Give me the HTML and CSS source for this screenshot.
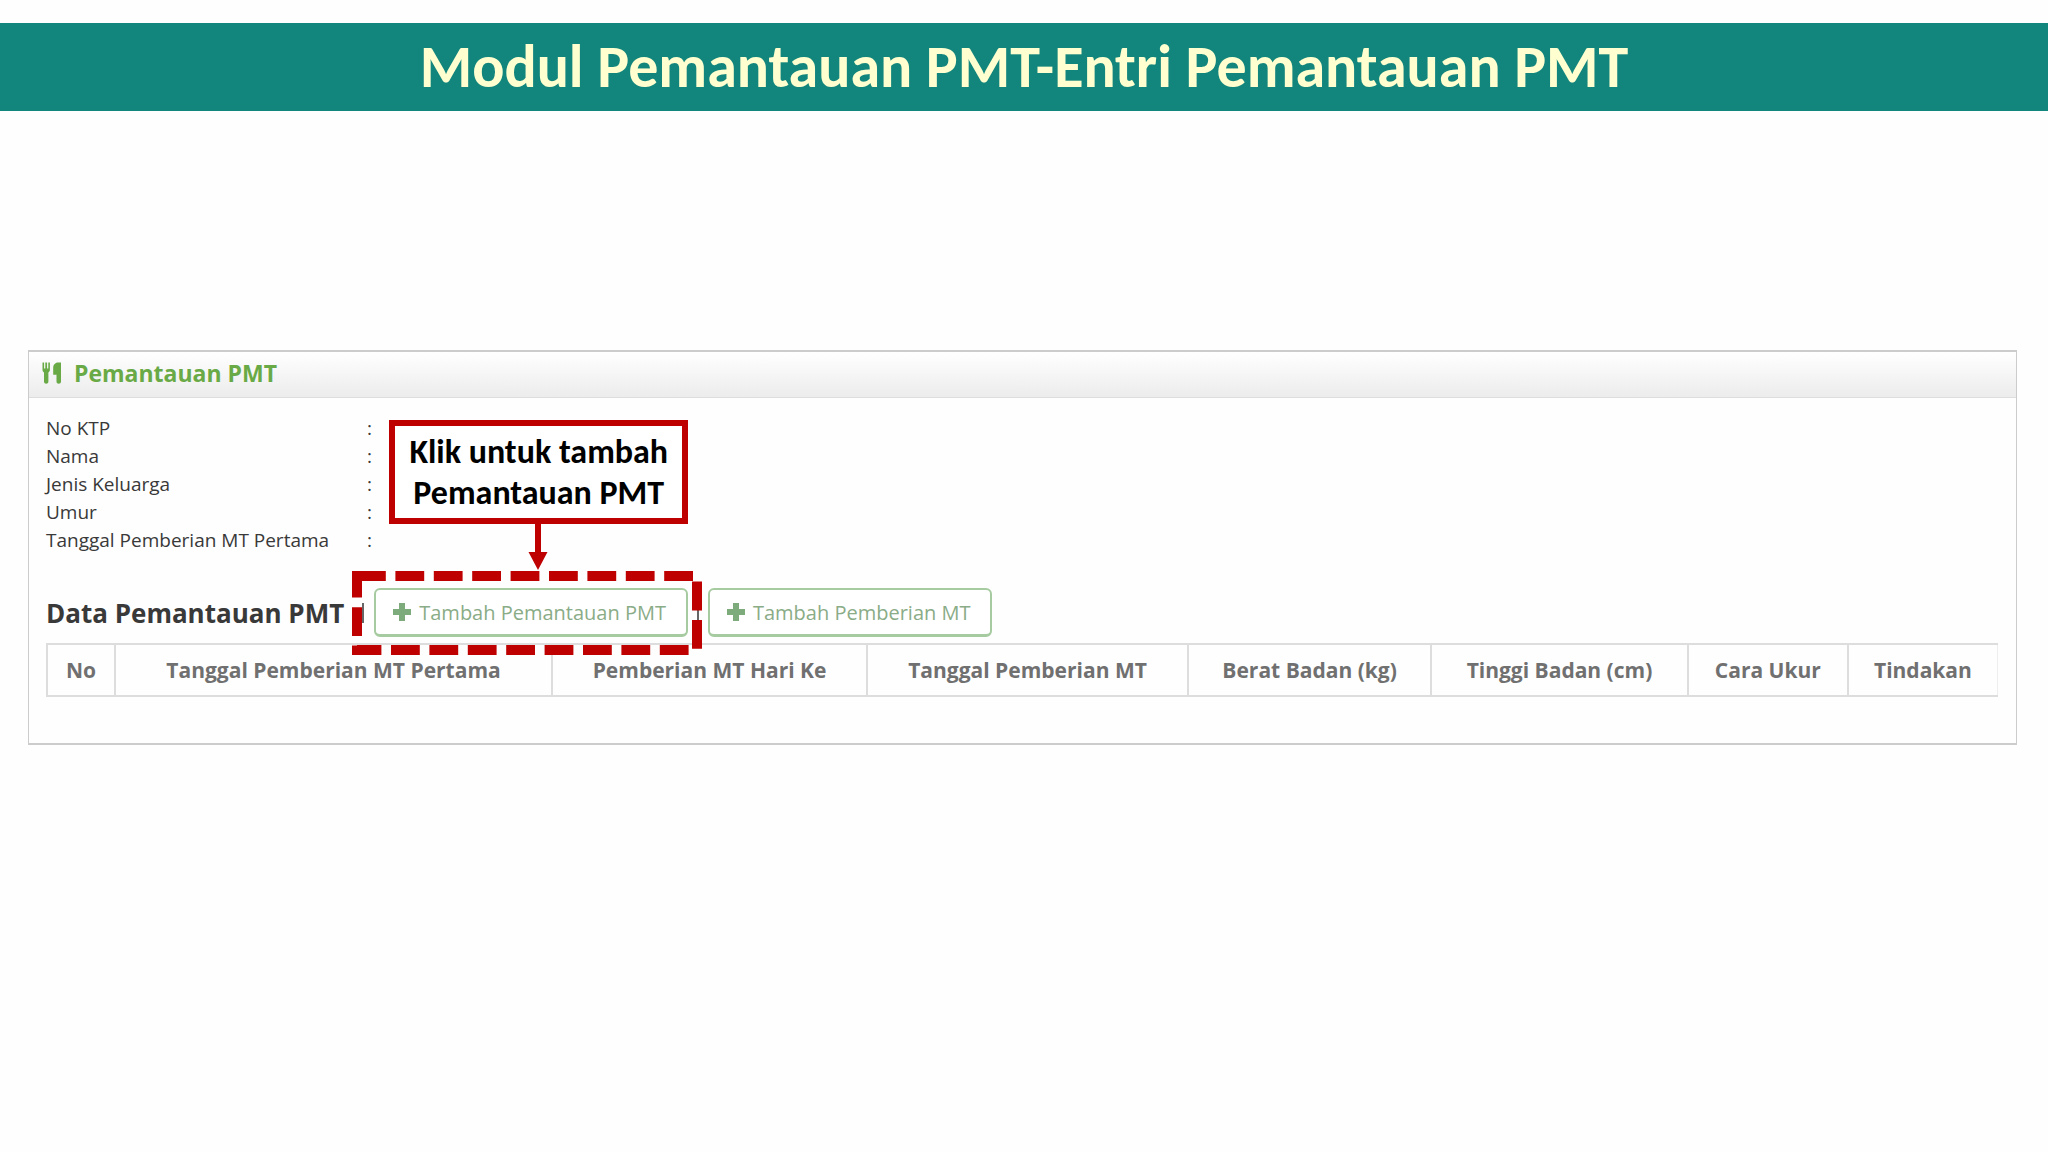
FILE: index.html
```html
<!DOCTYPE html>
<html lang="id">
<head>
  <meta charset="UTF-8">
  <meta name="viewport" content="width=device-width, initial-scale=1.0">
  <title>Modul Pemantauan PMT</title>
  <link rel="stylesheet" href="styles.css">
</head>
<body>
  <h1 class="banner">Modul Pemantauan PMT-Entri Pemantauan PMT</h1>

  <main class="panel">
    <div class="panel-header">
      <svg class="icon-cutlery" viewBox="0 0 20 22" aria-hidden="true">
        <path d="M0.500 0.500h1.600v6h1.200v-6h1.800v6h1.200v-6h1.600v7.300c0 1.300-.8 2.200-1.500 2.600v9.300c0 2.600-4.400 2.600-4.400 0v-9.300c-.7-.4-1.500-1.300-1.500-2.600z"/>
        <path d="M19 0.500v19.200c0 2.600-4.500 2.600-4.500 0v-6.900h-3.300V5.500c0-3 2.400-5 5.200-5z"/>
      </svg>
      <h2 class="panel-title">Pemantauan PMT</h2>
    </div>

    <div class="panel-body">
      <dl class="info">
        <dt>No KTP</dt><dd>:</dd>
        <dt>Nama</dt><dd>:</dd>
        <dt>Jenis Keluarga</dt><dd>:</dd>
        <dt>Umur</dt><dd>:</dd>
        <dt>Tanggal Pemberian MT Pertama</dt><dd>:</dd>
      </dl>

      <div class="toolbar">
        <h3 class="toolbar-title">Data Pemantauan PMT</h3>
        <span class="divider"></span>
        <div class="highlight">
          <button class="button" type="button">
            <svg class="icon-plus" viewBox="0 0 20 20" aria-hidden="true"><path d="M7 1h6v6h6v6h-6v6H7v-6H1V7h6z"/></svg>
            Tambah Pemantauan PMT
          </button>
          <svg class="dashes" viewBox="0 0 350 84" aria-hidden="true">
            <rect x="5" y="5" width="340" height="74"/>
          </svg>
          <svg class="arrow" viewBox="0 0 20 46" aria-hidden="true">
            <path d="M7 0h6v28h6.500L10 46 0.500 28H7z"/>
          </svg>
          <div class="callout">Klik untuk tambah<br>Pemantauan PMT</div>
        </div>
        <span class="divider"></span>
        <button class="button" type="button">
          <svg class="icon-plus" viewBox="0 0 20 20" aria-hidden="true"><path d="M7 1h6v6h6v6h-6v6H7v-6H1V7h6z"/></svg>
          Tambah Pemberian MT
        </button>
      </div>

      <table class="data-table">
        <thead>
          <tr>
            <th>No</th>
            <th>Tanggal Pemberian MT Pertama</th>
            <th>Pemberian MT Hari Ke</th>
            <th>Tanggal Pemberian MT</th>
            <th>Berat Badan (kg)</th>
            <th>Tinggi Badan (cm)</th>
            <th>Cara Ukur</th>
            <th>Tindakan</th>
          </tr>
        </thead>
      </table>
    </div>
  </main>
</body>
</html>
```
FILE: styles.css
```css
* {
  box-sizing: border-box;
}
body {
  margin: 0;
  padding-top: 23px;
  font-family: "Open Sans", sans-serif;
  font-size: 19px;
  color: #393939;
  background-color: #fefefe;
}
.banner {
  margin: 0;
  padding: 11px 0;
  background-color: #12857d;
  color: #ffffcf;
  font-family: Calibri, Carlito, Lato, sans-serif;
  font-size: 60px;
  line-height: 66px;
  text-align: center;
}
.panel {
  margin: 239px 31px 0 28px;
  border: 1px solid #ccc;
  border-top-width: 2px;
  border-bottom-width: 2px;
}
.panel-header {
  display: flex;
  align-items: center;
  gap: 12px;
  height: 46px;
  padding: 0 13px 3px;
  border-bottom: 1px solid #ddd;
  background-image: linear-gradient(#fff, #ececec);
  color: #69aa46;
}
.icon-cutlery {
  width: 20px;
  height: 22px;
  fill: currentColor;
}
.panel-title {
  margin: 0;
  font-size: 23px;
  line-height: 30px;
}
.panel-body {
  padding: 16px 18px 46px 17px;
}
.info {
  display: grid;
  grid-template-columns: 321px 1fr;
  margin: 0;
  line-height: 28px;
}
.info dd {
  margin: 0;
}
.toolbar {
  display: flex;
  align-items: center;
  margin-top: 34px;
}
.toolbar-title {
  margin: 0 18px 0 0;
  font-size: 26px;
  line-height: 36px;
}
.divider {
  width: 2px;
  height: 20px;
  background-color: #666;
}
.highlight {
  position: relative;
  margin: 0 9px 0 10px;
}
.button {
  display: flex;
  align-items: center;
  gap: 7px;
  height: 49px;
  padding: 0 20px 0 16px;
  border: 2px solid #a7cba1;
  border-bottom-width: 3px;
  border-radius: 6px;
  background-color: #fff;
  color: #8aac87;
  font-family: inherit;
  font-size: 20px;
  cursor: pointer;
}
.divider + .button {
  margin-left: 9px;
}
.icon-plus {
  width: 20px;
  height: 20px;
  fill: #7eab7c;
}

/* callout pointing at the first button */
.dashes {
  position: absolute;
  top: -17px;
  left: -22px;
  width: 350px;
  height: 84px;
  fill: none;
  stroke: #be0000;
  stroke-width: 10;
  stroke-dasharray: 28.8 9.6;
  pointer-events: none;
}
.callout {
  position: absolute;
  bottom: 113px;
  left: 15px;
  width: 299px;
  padding: 5px 0;
  border: 6px solid #be0000;
  background-color: #fff;
  color: #000;
  font-family: Calibri, Carlito, Lato, sans-serif;
  font-size: 34px;
  font-weight: bold;
  line-height: 41px;
  text-align: center;
}
.arrow {
  position: absolute;
  bottom: 67px;
  left: 154px;
  width: 20px;
  height: 46px;
  fill: #be0000;
}

.data-table {
  width: 100%;
  margin-top: 6px;
  border-collapse: collapse;
  border: 2px solid #ddd;
  border-right: 1px solid #eee;
}
.data-table th {
  height: 52px;
  padding: 0 12px;
  border-left: 2px solid #ddd;
  color: #707070;
  font-size: 21px;
  line-height: 28px;
  white-space: nowrap;
}
```
